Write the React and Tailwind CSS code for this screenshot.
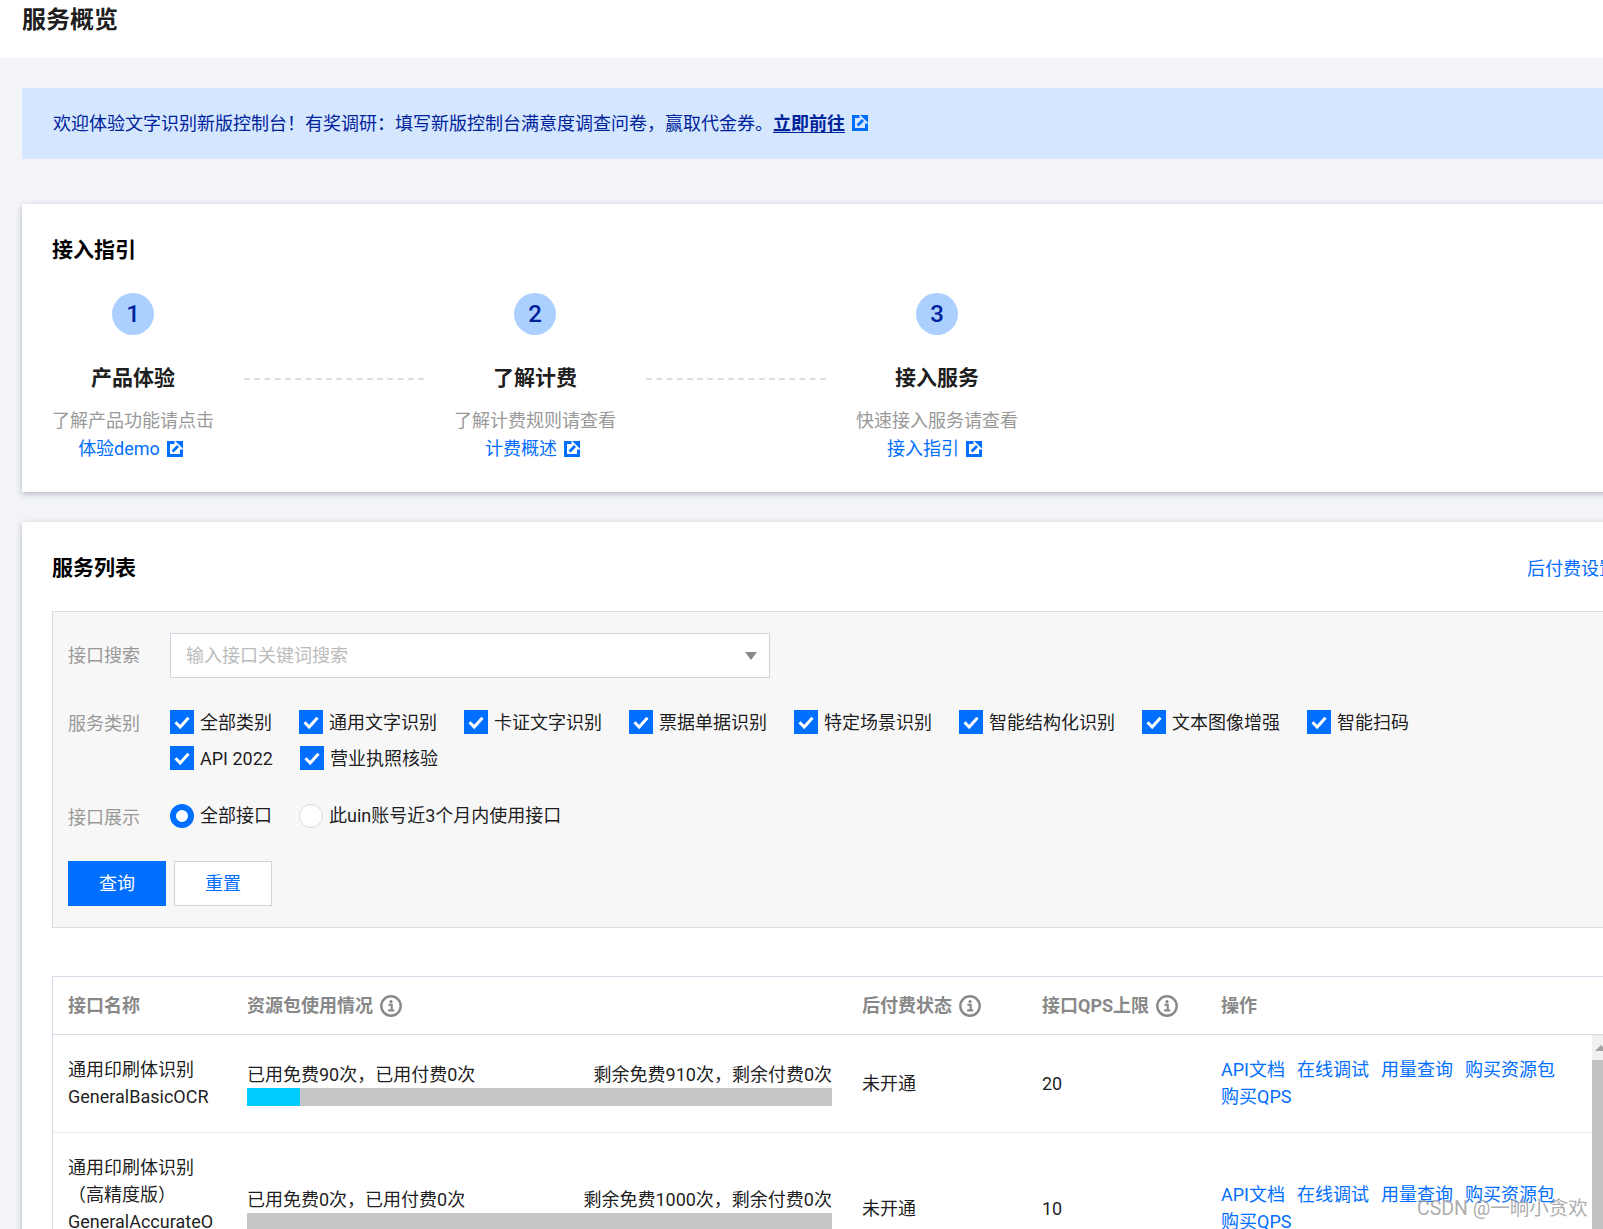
function ExtIcon({ className = "" }) {
  return (
    <svg viewBox="0 0 16 16" className={`inline-block h-4 w-4 shrink-0 ${className}`} fill="none">
      <path d="M7.5 1.5H1.5v13h13V8.5" stroke="#006eff" strokeWidth="3" />
      <path d="M5.6 10.4 11 5" stroke="#006eff" strokeWidth="2.8" />
      <path d="M8.2 0H16v7.8z" fill="#006eff" />
    </svg>
  );
}

function InfoIcon() {
  return (
    <svg viewBox="0 0 22 22" className="ml-[7px] inline-block h-[22px] w-[22px] shrink-0" fill="none">
      <circle cx="11" cy="11" r="9.7" stroke="#888888" strokeWidth="2.4" />
      <circle cx="11" cy="6.6" r="1.6" fill="#888888" />
      <path d="M8.4 9.7H11.7V14.8M8.2 15.4H14.2" stroke="#888888" strokeWidth="2.1" />
    </svg>
  );
}

function Check({ label }) {
  return (
    <label className="flex h-6 items-center gap-[6px] text-black/90">
      <span className="flex h-6 w-6 items-center justify-center bg-[#006eff]">
        <svg viewBox="0 0 24 24" className="h-6 w-6" fill="none">
          <path d="M5.5 12.2 10.2 17 18.5 7.8" stroke="#fff" strokeWidth="3" />
        </svg>
      </span>
      {label}
    </label>
  );
}

function Step({ num, title, desc, link }) {
  return (
    <div className="flex w-[162px] shrink-0 flex-col items-center">
      <div className="flex h-[42px] w-[42px] items-center justify-center rounded-full bg-[#abcfff] text-[24px] font-medium text-[#00239c]">
        {num}
      </div>
      <div className="mt-[27px] text-[21px] leading-[32px] font-bold text-black/90">{title}</div>
      <div className="mt-[13px] text-[18px] leading-[27px] whitespace-nowrap text-[#999999]">{desc}</div>
      <a className="mt-px flex items-center gap-[7px] pr-[5px] text-[18px] leading-[27px] text-[#006eff]">
        {link}
        <ExtIcon />
      </a>
    </div>
  );
}

function Divider() {
  return <div className="mx-[30px] mt-[85px] h-0 w-[180px] shrink-0 border-t-2 border-dashed border-[#dddddd]" />;
}

const checks = ["全部类别", "通用文字识别", "卡证文字识别", "票据单据识别", "特定场景识别", "智能结构化识别", "文本图像增强", "智能扫码", "API 2022", "营业执照核验"];
const cols = "grid grid-cols-[178px_615px_180px_179px_1fr]";

function Row({ name, used, left, pct, qps, last }) {
  return (
    <div className={`${cols} items-center pt-[21px] pb-[22px] ${last ? "" : "border-b border-[#e7eaef]"}`}>
      <div className="pr-4 pl-[15px] leading-[27px] break-all text-black/90">
        {name.map((n) => (
          <div key={n}>{n}</div>
        ))}
      </div>
      <div className="pr-[14px] pl-[16px]">
        <div className="flex justify-between leading-[27px] text-black/90">
          <span>{used}</span>
          <span>{left}</span>
        </div>
        <div className="h-[18px] bg-[#c6c6c6]">
          <div className="h-full bg-[#00ccff]" style={{ width: pct }} />
        </div>
      </div>
      <div className="px-4 text-black/90">未开通</div>
      <div className="px-4 text-black/90">{qps}</div>
      <div className="flex flex-wrap gap-x-3 pl-4 leading-[27px] text-[#006eff]">
        <a>API文档</a>
        <a>在线调试</a>
        <a>用量查询</a>
        <a>购买资源包</a>
        <a>购买QPS</a>
      </div>
    </div>
  );
}

export default function App() {
  return (
    <div className="relative h-[1229px] w-[1603px] overflow-hidden bg-[#f2f4f8] font-['Roboto','Noto_Sans_CJK_SC',sans-serif] text-[18px]">
      <div className="h-[58px] bg-white pl-[22px] text-[24px] leading-[40px] font-bold text-black/90">服务概览</div>

      <div className="w-[1647px] pt-[30px] pl-[22px]">
        <div className="flex h-[71px] items-center bg-[#d5e7ff] pl-[31px] text-[#00239c]">
          欢迎体验文字识别新版控制台！有奖调研：填写新版控制台满意度调查问卷，赢取代金券。
          <a className="font-bold underline underline-offset-2">立即前往</a>
          <ExtIcon className="mb-[2px] ml-[7px]" />
        </div>

        <section className="mt-[45px] h-[288px] bg-white px-[30px] pt-[30px] shadow-[0_2px_6px_rgba(54,58,80,0.32)]">
          <h2 className="text-[21px] leading-[32px] font-bold text-black">接入指引</h2>
          <div className="mt-[27px] flex">
            <Step num="1" title="产品体验" desc="了解产品功能请点击" link="体验demo" />
            <Divider />
            <Step num="2" title="了解计费" desc="了解计费规则请查看" link="计费概述" />
            <Divider />
            <Step num="3" title="接入服务" desc="快速接入服务请查看" link="接入指引" />
          </div>
        </section>

        <section className="mt-[30px] h-[800px] bg-white px-[30px] pt-[30px] shadow-[0_2px_6px_rgba(54,58,80,0.32)]">
          <div className="flex items-center justify-between">
            <h2 className="text-[21px] leading-[32px] font-bold text-black">服务列表</h2>
            <a className="text-[#006eff]">后付费设置</a>
          </div>

          <div className="mt-[27px] h-[317px] border border-[#dddddd] bg-[#f7f7f8] pt-[21px] pl-[15px]">
            <div className="flex items-center">
              <span className="w-[102px] text-[#999999]">接口搜索</span>
              <div className="flex h-[45px] w-[600px] items-center justify-between border border-[#cfd5de] bg-white pr-[12px] pl-[15px] text-[#bbbbbb]">
                输入接口关键词搜索
                <span className="h-0 w-0 border-x-[6px] border-t-[8px] border-x-transparent border-t-[#888888]" />
              </div>
            </div>

            <div className="mt-[32px] flex">
              <span className="w-[102px] pt-[2px] leading-[24px] text-[#999999]">服务类别</span>
              <div className="flex w-[1260px] flex-wrap gap-x-[27px] gap-y-3">
                {checks.map((c) => (
                  <Check key={c} label={c} />
                ))}
              </div>
            </div>

            <div className="mt-[32px] flex items-center">
              <span className="h-6 w-[102px] leading-[28px] text-[#999999]">接口展示</span>
              <label className="flex items-center gap-[6px] text-black/90">
                <span className="h-6 w-6 rounded-full border-[6px] border-[#006eff] bg-white" />
                全部接口
              </label>
              <label className="ml-[27px] flex items-center gap-[6px] text-black/90">
                <span className="h-6 w-6 rounded-full border border-[#d5d9e2] bg-white" />
                此uin账号近3个月内使用接口
              </label>
            </div>

            <div className="mt-[32px] flex gap-2">
              <button className="h-[45px] w-[98px] bg-[#006eff] text-white">查询</button>
              <button className="h-[45px] w-[98px] border border-[#cfd5de] bg-white text-[#006eff]">重置</button>
            </div>
          </div>

          <div className="mt-[48px] mr-[8px] border-t border-l border-[#d5dbe6] bg-white">
            <div className={`${cols} h-[58px] items-center border-b border-[#d5dbe6] font-bold text-[#888888]`}>
              <div className="pr-4 pl-[15px]">接口名称</div>
              <div className="flex items-center px-4">资源包使用情况<InfoIcon /></div>
              <div className="flex items-center px-4">后付费状态<InfoIcon /></div>
              <div className="flex items-center px-4">接口QPS上限<InfoIcon /></div>
              <div className="px-4">操作</div>
            </div>
            <div className="flex h-[300px]">
              <div className="min-w-0 flex-1">
                <Row
                  name={["通用印刷体识别", "GeneralBasicOCR"]}
                  used="已用免费90次，已用付费0次"
                  left="剩余免费910次，剩余付费0次"
                  pct="9%"
                  qps="20"
                />
                <Row
                  name={["通用印刷体识别", "（高精度版）", "GeneralAccurateOCR"]}
                  used="已用免费0次，已用付费0次"
                  left="剩余免费1000次，剩余付费0次"
                  pct="0%"
                  qps="10"
                  last
                />
              </div>
              <div className="w-[17px] shrink-0 bg-[#f1f1f1]">
                <div className="flex h-[25px] items-center justify-center">
                  <span className="h-0 w-0 border-x-[6px] border-b-[6px] border-x-transparent border-b-[#a3a3a3]" />
                </div>
                <div className="h-[270px] bg-[#c1c1c1]" />
              </div>
            </div>
          </div>
        </section>
      </div>

      {/* CSDN 水印 */}
      <div className="absolute top-[1195px] left-[1417px] text-[19.5px] leading-[27px] whitespace-nowrap text-[#a3a3a3]/90">
        CSDN @一晌小贪欢
      </div>
    </div>
  );
}
